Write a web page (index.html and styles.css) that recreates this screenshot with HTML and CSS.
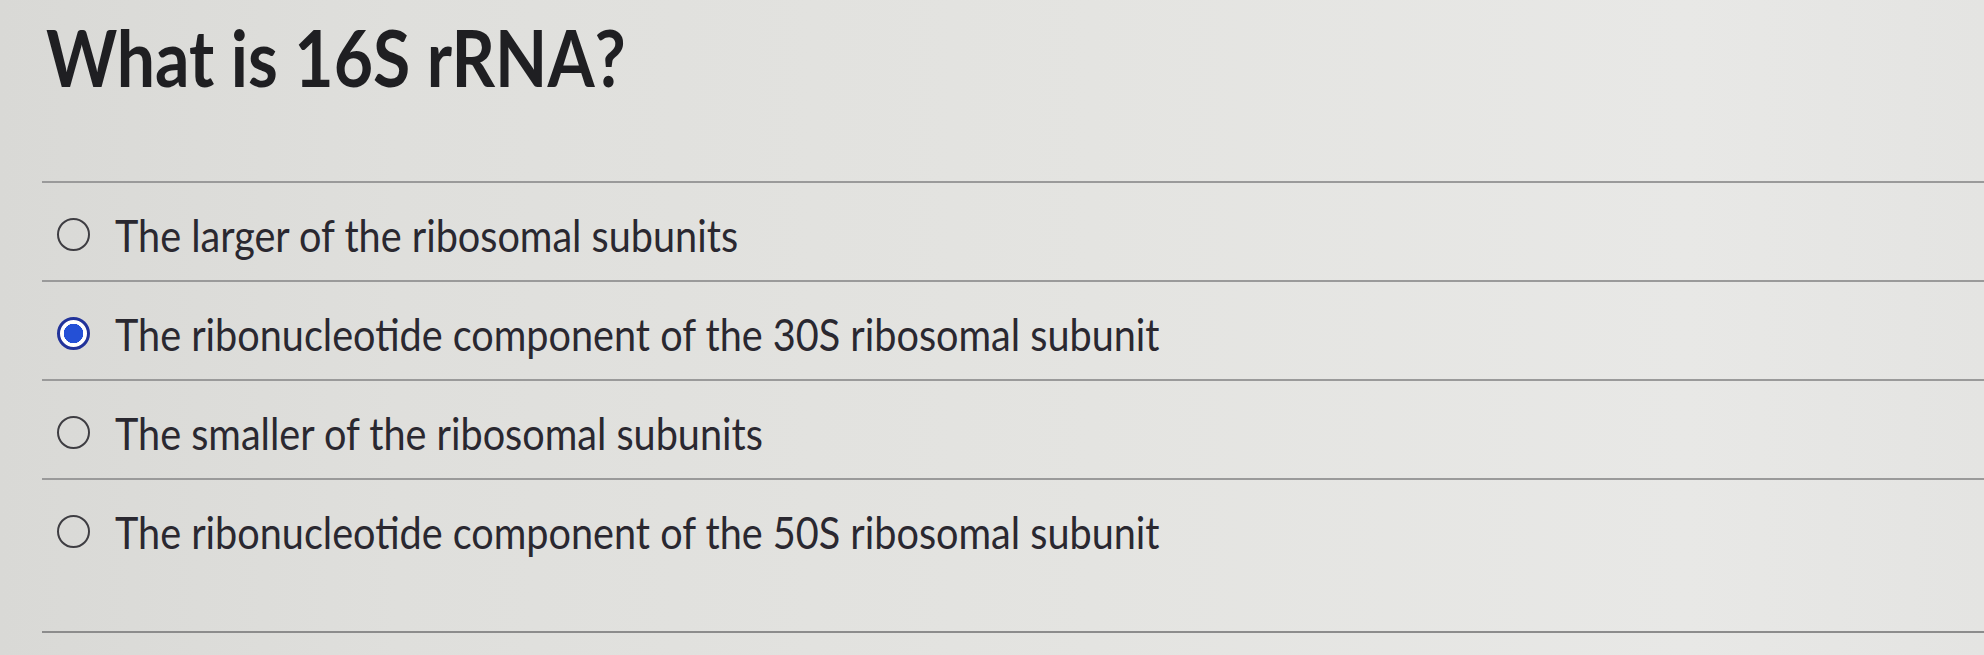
FILE: index.html
```html
<!DOCTYPE html>
<html lang="en">
<head>
<meta charset="utf-8">
<title>What is 16S rRNA?</title>
<link rel="stylesheet" href="styles.css">
</head>
<body>
<main class="quiz">
  <h1 class="question"><span class="question-text">What is 16S rRNA?</span></h1>
  <ul class="answers">
    <li class="answer"><span class="radio"></span><span class="label">The larger of the ribosomal subunits</span></li>
    <li class="answer"><span class="radio checked"></span><span class="label">The ribonucleotide component of the 30S ribosomal subunit</span></li>
    <li class="answer"><span class="radio"></span><span class="label">The smaller of the ribosomal subunits</span></li>
    <li class="answer"><span class="radio"></span><span class="label">The ribonucleotide component of the 50S ribosomal subunit</span></li>
  </ul>
</main>
</body>
</html>
```
FILE: styles.css
```css
html, body {
  margin: 0;
  padding: 0;
  height: 100%;
}
body {
  background: linear-gradient(90deg, #d9d9d6 0%, #dfdfdc 20%, #e4e4e1 55%, #e8e8e6 85%, #e4e4e2 100%);
  font-family: Lato, "Open Sans", sans-serif;
  color: #2b2a30;
  overflow: hidden;
}
.quiz {
  padding-left: 42px;
}
.question {
  margin: 0;
  padding: 9px 0 0 4px;
  height: 181px;
  box-sizing: border-box;
  font-size: 78px;
  font-weight: 700;
  line-height: 96px;
  color: #1f1f22;
}
.question-text {
  display: inline-block;
  transform: scaleX(0.87);
  transform-origin: left center;
}
.answers {
  list-style: none;
  margin: 0;
  padding: 0 0 54px 0;
  border-bottom: 2px solid #8c8c8c;
}
.answer {
  display: flex;
  align-items: center;
  height: 99px;
  padding-top: 6px;
  box-sizing: border-box;
  border-top: 2px solid #9a9a9a;
}
.radio {
  width: 33px;
  height: 33px;
  border: 2.5px solid #3e3d42;
  border-radius: 50%;
  margin-left: 15px;
  margin-right: 25px;
  flex: none;
  box-sizing: border-box;
}
.radio.checked {
  border: 3px solid #22339a;
  background: radial-gradient(circle, #2450d6 0 9.5px, #ffffff 10px 100%);
}
.label {
  display: inline-block;
  font-size: 44px;
  line-height: 52px;
  color: #2a2830;
  white-space: nowrap;
  transform: scaleX(0.9);
  transform-origin: left center;
}
```
